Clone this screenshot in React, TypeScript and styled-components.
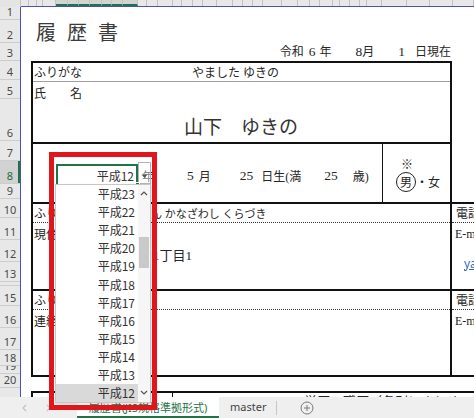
import styled, { createGlobalStyle } from 'styled-components'

const jp = `"Noto Sans CJK JP", sans-serif`
const formFont = `"Liberation Serif", "Noto Sans CJK JP", serif`
const ui = `"Noto Sans", "Noto Sans CJK JP", sans-serif`

const rowHeights = [13, 23, 18, 19, 19, 42, 20, 23, 15, 19, 22, 22, 20, 4, 20, 22, 22, 16, 8, 14, 30]
const colWidths = [8, 8, 6, 13, 12, 11, 11, 12, 10, 11, 15, 9, 11, 15, 9, 11, 10, 14, 16, 10, 10, 10, 19, 16, 12, 10, 13, 7, 10, 10, 7, 15, 25, 23, 23, 21]
const years = ['平成23', '平成22', '平成21', '平成20', '平成19', '平成18', '平成17', '平成16', '平成15', '平成14', '平成13', '平成12']

const GlobalStyle = createGlobalStyle`
    * { box-sizing: border-box; }
    html, body { margin: 0; padding: 0; background: #ffffff; }
    body { font-family: ${jp}; color: #222; }
`

const Window = styled.div`
    position: relative;
    width: 474px;
    height: 418px;
    overflow: hidden;
    display: flex;
    flex-direction: column;
    background: #ffffff;
`

const ColumnHeader = styled.div`
    flex: 0 0 7px;
    display: flex;
`

const Corner = styled.div`
    flex: 0 0 21px;
    background: #e4e4e4;
    border-right: 1px solid #c4c4c4;
`

const ColumnStrip = styled.div`
    flex: 1;
    display: flex;
    overflow: hidden;
    border-bottom: 1px solid #4d4dc4;
`

const ColumnCell = styled.div<{ $w: number; $selected?: boolean }>`
    flex: 0 0 ${p => p.$w}px;
    background: ${p => (p.$selected ? '#d3d3d3' : '#e8e8e8')};
    border-right: 1px solid #c2c2c2;
    border-bottom: ${p => (p.$selected ? '2px solid #217346' : 'none')};
`

const Body = styled.div`
    flex: 1;
    display: flex;
    min-height: 0;
`

const RowHeader = styled.div`
    flex: 0 0 21px;
    display: flex;
    flex-direction: column;
    overflow: hidden;
    background: #e8e8e8;
    border-right: 1px solid #4d4dc4;
`

const RowLabel = styled.div<{ $h: number; $selected?: boolean }>`
    flex: 0 0 ${p => p.$h}px;
    display: flex;
    align-items: flex-end;
    justify-content: center;
    overflow: hidden;
    padding-bottom: 1px;
    font: 11px/12px ${ui};
    color: ${p => (p.$selected ? '#1d6b40' : '#4a4a4a')};
    background: ${p => (p.$selected ? '#d2d2d2' : 'transparent')};
    border-bottom: 1px solid #cdcdcd;
    box-shadow: ${p => (p.$selected ? 'inset -2px 0 0 #217346' : 'none')};
`

const Sheet = styled.div`
    flex: 1;
    min-width: 0;
    display: flex;
    flex-direction: column;
    overflow: hidden;
    padding-left: 10px;
    font-family: ${formFont};
    font-size: 12px;
    color: #262626;
`

const Gap = styled.div<{ $h: number }>`
    flex: 0 0 ${p => p.$h}px;
`

const TitleRow = styled.div`
    flex: 0 0 23px;
    display: flex;
    align-items: center;
    padding-left: 5px;
    font: 20px/23px ${jp};
    letter-spacing: 11px;
    color: #3c3c3c;
`

const DateRow = styled.div`
    flex: 0 0 18px;
    width: 421px;
    display: flex;
    align-items: center;
    justify-content: flex-end;
    padding-right: 1px;
    line-height: 14px;
`

const Piece = styled.span<{ $gap?: number }>`
    margin-left: ${p => p.$gap ?? 0}px;
    white-space: pre;
`

const Num = styled(Piece)`
    font-size: 13.5px;
`

const FormBlock = styled.div`
    flex: 0 0 80px;
    width: 421px;
    display: flex;
    flex-direction: column;
    border: 2px solid #111;
    border-bottom: none;
`

const KanaRow = styled.div<{ $h: number; $dotted?: boolean }>`
    flex: 0 0 ${p => p.$h}px;
    display: flex;
    align-items: center;
    white-space: nowrap;
    border-bottom: 1px ${p => (p.$dotted ? 'dotted #333' : 'solid #a0a0a0')};
`

const Label = styled.span<{ $w: number }>`
    flex: 0 0 ${p => p.$w}px;
    padding-left: 1px;
    white-space: pre;
    overflow: hidden;
`

const Kana = styled.span<{ $size?: number }>`
    font-size: ${p => p.$size ?? 12}px;
    white-space: pre;
`

const NameLabelRow = styled.div`
    flex: 0 0 19px;
    display: flex;
    align-items: center;
    padding: 2px 0 0 1px;
    white-space: pre;
`

const NameRow = styled.div`
    flex: 0 0 42px;
    display: flex;
    align-items: center;
    padding: 6px 0 0 151px;
    font-size: 19px;
    color: #333;
    white-space: pre;
    border-bottom: 2px solid #111;
`

const BirthBlock = styled.div`
    flex: 0 0 58px;
    width: 421px;
    display: flex;
    border-left: 2px solid #111;
    border-right: 2px solid #111;
`

const BirthCell = styled.div`
    flex: 1;
    display: flex;
    align-items: center;
    padding: 20px 0 15px;
`

const YearCell = styled.div<{ $selected?: boolean }>`
    flex: 0 0 82px;
    height: 23px;
    margin-left: 23px;
    display: flex;
    align-items: center;
    justify-content: flex-end;
    padding-right: 2px;
    font: 12px/1 ${jp};
    color: #333;
    border: 2px solid ${p => (p.$selected ? '#217346' : 'transparent')};
`

const GenderCell = styled.div`
    flex: 0 0 68px;
    display: flex;
    flex-direction: column;
    align-items: flex-start;
    padding: 15px 0 0 13px;
    border-left: 1px solid #111;
`

const Note = styled.span`
    margin-left: 5px;
    font-size: 12px;
    line-height: 12px;
`

const GenderRow = styled.div`
    display: flex;
    align-items: center;
    margin-top: 1px;
    height: 20px;
`

const Circled = styled.span`
    width: 20px;
    height: 20px;
    display: flex;
    align-items: center;
    justify-content: center;
    border: 1px solid #222;
    border-radius: 50%;
`

const AddressBlock = styled.div<{ $h: number; $closed?: boolean }>`
    flex: 0 0 ${p => p.$h}px;
    display: flex;
    border-top: 2px solid #111;
    border-bottom: ${p => (p.$closed ? '2px solid #111' : 'none')};
`

const AddressCell = styled.div`
    flex: 0 0 421px;
    display: flex;
    flex-direction: column;
    border-left: 2px solid #111;
    border-right: 2px solid #111;
`

const Line = styled.div<{ $h: number; $indent?: number; $size?: number; $top?: number }>`
    flex: 0 0 ${p => p.$h}px;
    display: flex;
    align-items: center;
    margin-top: ${p => p.$top ?? 0}px;
    padding-left: ${p => p.$indent ?? 1}px;
    font-size: ${p => p.$size ?? 12}px;
    white-space: pre;
    overflow: hidden;
`

const PhoneCell = styled.div`
    flex: 1;
    min-width: 0;
    display: flex;
    flex-direction: column;
    overflow: hidden;
`

const MailLink = styled.span`
    color: #2f6dc6;
    text-decoration: underline;
    font-family: ${ui};
    font-size: 12px;
`

const HistoryTable = styled.div`
    flex: 0 0 30px;
    display: flex;
    border-top: 2px solid #111;
`

const HistoryDate = styled.div`
    flex: 0 0 142px;
    border-left: 2px solid #111;
    border-right: 1px solid #111;
`

const HistoryHead = styled.div`
    flex: 1;
    padding: 1px 0 0 131px;
    font-size: 13px;
    line-height: 16px;
    white-space: nowrap;
    overflow: hidden;
`

const TabBar = styled.div`
    flex: 0 0 21px;
    display: flex;
    align-items: stretch;
    background: #efefef;
    font-family: ${ui};
    font-size: 11px;
`

const NavArrows = styled.div`
    flex: 0 0 77px;
    display: flex;
    align-items: center;
    gap: 15px;
    padding-left: 21px;
`

const SheetTab = styled.div<{ $active?: boolean }>`
    flex: 0 0 ${p => (p.$active ? '142px' : 'auto')};
    display: flex;
    align-items: center;
    justify-content: center;
    padding: 0 ${p => (p.$active ? 0 : 10)}px 0 ${p => (p.$active ? 0 : 11)}px;
    white-space: nowrap;
    background: ${p => (p.$active ? '#ffffff' : 'transparent')};
    color: ${p => (p.$active ? '#217346' : '#444')};
    border-bottom: 2px solid ${p => (p.$active ? '#217346' : 'transparent')};
`

const TabDivider = styled.div`
    align-self: center;
    width: 1px;
    height: 14px;
    background: #c6c6c6;
`

const AddSheet = styled.div`
    display: flex;
    align-items: center;
    margin-left: 23px;
`

const DropButton = styled.div`
    position: absolute;
    left: 138px;
    top: 162px;
    width: 13px;
    height: 22px;
    display: flex;
    align-items: flex-end;
    justify-content: center;
    padding-bottom: 4px;
    border: 1px solid #b4b4b4;
    background: rgba(255, 255, 255, 0.45);
`

const FillHandle = styled.div`
    position: absolute;
    left: 135px;
    top: 182px;
    width: 5px;
    height: 5px;
    background: #217346;
    border: 1px solid #ffffff;
`

const ListBox = styled.div`
    position: absolute;
    left: 55px;
    top: 184px;
    width: 96px;
    height: 219px;
    display: flex;
    background: #ffffff;
    border: 1px solid #c6c6c6;
    box-shadow: 1px 1px 2px rgba(0, 0, 0, 0.12);
`

const Options = styled.div`
    flex: 1;
    display: flex;
    flex-direction: column;
`

const Option = styled.div<{ $selected?: boolean }>`
    flex: 0 0 18.1px;
    display: flex;
    align-items: center;
    justify-content: flex-end;
    padding-right: 3px;
    font: 12px/1 ${jp};
    color: #333;
    background: ${p => (p.$selected ? '#d9d9d9' : 'transparent')};
`

const ScrollBar = styled.div`
    flex: 0 0 12px;
    display: flex;
    flex-direction: column;
    background: #f6f6f6;
`

const ScrollArrow = styled.div`
    flex: 0 0 18px;
    display: flex;
    align-items: center;
    justify-content: center;
`

const ScrollTrack = styled.div`
    flex: 1;
    display: flex;
    flex-direction: column;
    align-items: center;
`

const Thumb = styled.div`
    margin-top: 34px;
    width: 10px;
    height: 31px;
    background: #c9c9c9;
`

const Annotation = styled.div`
    position: absolute;
    left: 49px;
    top: 152px;
    width: 108px;
    height: 258px;
    border: 5px solid #e1161d;
    pointer-events: none;
`

function Chevron({ dir, color = '#555' }: { dir: 'up' | 'down' | 'left' | 'right'; color?: string }) {
    const d = {
        up: 'M1 5 L4 2 L7 5',
        down: 'M1 2 L4 5 L7 2',
        left: 'M5 1 L2 4 L5 7',
        right: 'M3 1 L6 4 L3 7',
    }[dir]
    return <svg width="8" height="8" viewBox="0 0 8 8">
        <path d={d} fill="none" stroke={color} strokeWidth="1.2" />
    </svg>
}

export default function App() {
    let x = 21
    const columns = colWidths.map(w => {
        const selected = x >= 56 && x < 138
        x += w
        return { w, selected }
    })

    return <>
        <GlobalStyle />
        <Window>
            <ColumnHeader>
                <Corner />
                <ColumnStrip>
                    {columns.map((c, i) => <ColumnCell key={i} $w={c.w} $selected={c.selected} />)}
                </ColumnStrip>
            </ColumnHeader>
            <Body>
                <RowHeader>
                    {rowHeights.map((h, i) =>
                        <RowLabel key={i} $h={h} $selected={i === 7}>{i + 1}</RowLabel>)}
                </RowHeader>
                <Sheet>
                    <Gap $h={13} />
                    <TitleRow>履歴書</TitleRow>
                    <DateRow>
                        <Piece>令和</Piece>
                        <Num $gap={5}>6</Num>
                        <Piece $gap={4}>年</Piece>
                        <Num $gap={24}>8</Num>
                        <Piece>月</Piece>
                        <Num $gap={24}>1</Num>
                        <Piece $gap={10}>日現在</Piece>
                    </DateRow>
                    <FormBlock>
                        <KanaRow $h={17}>
                            <Label $w={159}>ふりがな</Label>
                            <Kana>やました ゆきの</Kana>
                        </KanaRow>
                        <NameLabelRow>氏　　名</NameLabelRow>
                        <NameRow>山下　ゆきの</NameRow>
                    </FormBlock>
                    <BirthBlock>
                        <BirthCell>
                            <YearCell $selected>平成12</YearCell>
                            <Piece $gap={4}>年</Piece>
                            <Num $gap={33}>5</Num>
                            <Piece $gap={5}>月</Piece>
                            <Num $gap={29}>25</Num>
                            <Piece $gap={8}>日生(満</Piece>
                            <Num $gap={23}>25</Num>
                            <Piece $gap={15}>歳)</Piece>
                        </BirthCell>
                        <GenderCell>
                            <Note>※</Note>
                            <GenderRow>
                                <Circled>男</Circled>
                                <span>・女</span>
                            </GenderRow>
                        </GenderCell>
                    </BirthBlock>
                    <AddressBlock $h={87}>
                        <AddressCell>
                            <KanaRow $h={17} $dotted>
                                <Label $w={63}>ふりがな</Label>
                                <Kana $size={11}>いしかわけん かなざわし くらづき</Kana>
                            </KanaRow>
                            <Line $h={22}>現住所</Line>
                            <Line $h={18} $indent={55} $size={13}>金沢市倉月1丁目1</Line>
                        </AddressCell>
                        <PhoneCell>
                            <KanaRow $h={17} $dotted>
                                <Label $w={60}> 電話</Label>
                            </KanaRow>
                            <Line $h={22} $indent={3}>E-mail</Line>
                            <Line $h={22} $indent={12} $top={7}>
                                <MailLink>yamashita.yukino@example.jp</MailLink>
                            </Line>
                        </PhoneCell>
                    </AddressBlock>
                    <AddressBlock $h={88} $closed>
                        <AddressCell>
                            <KanaRow $h={18} $dotted>
                                <Label $w={63}>ふりがな</Label>
                            </KanaRow>
                            <Line $h={22}>連絡先</Line>
                        </AddressCell>
                        <PhoneCell>
                            <KanaRow $h={18} $dotted>
                                <Label $w={60}> 電話</Label>
                            </KanaRow>
                            <Line $h={22} $indent={3}>E-mail</Line>
                        </PhoneCell>
                    </AddressBlock>
                    <Gap $h={14} />
                    <HistoryTable>
                        <HistoryDate />
                        <HistoryHead>学歴・職歴（各別にまとめて書く）</HistoryHead>
                    </HistoryTable>
                </Sheet>
            </Body>
            <TabBar>
                <NavArrows>
                    <Chevron dir="left" color="#c2c2c2" />
                    <Chevron dir="right" color="#c2c2c2" />
                </NavArrows>
                <SheetTab $active>履歴書(JIS規格準拠形式)</SheetTab>
                <SheetTab>master</SheetTab>
                <TabDivider />
                <AddSheet>
                    <svg width="14" height="14" viewBox="0 0 14 14">
                        <circle cx="7" cy="7" r="6" fill="none" stroke="#7a7a7a" />
                        <path d="M7 4v6M4 7h6" stroke="#7a7a7a" />
                    </svg>
                </AddSheet>
            </TabBar>

            <DropButton>
                <svg width="7" height="5" viewBox="0 0 7 5">
                    <path d="M0.5 0.5 H6.5 L3.5 4 Z" fill="#555" />
                </svg>
            </DropButton>
            <FillHandle />
            <ListBox>
                <Options>
                    {years.map((y, i) => <Option key={y} $selected={i === years.length - 1}>{y}</Option>)}
                </Options>
                <ScrollBar>
                    <ScrollArrow><Chevron dir="up" /></ScrollArrow>
                    <ScrollTrack><Thumb /></ScrollTrack>
                    <ScrollArrow><Chevron dir="down" /></ScrollArrow>
                </ScrollBar>
            </ListBox>
            <Annotation />
        </Window>
    </>
}
